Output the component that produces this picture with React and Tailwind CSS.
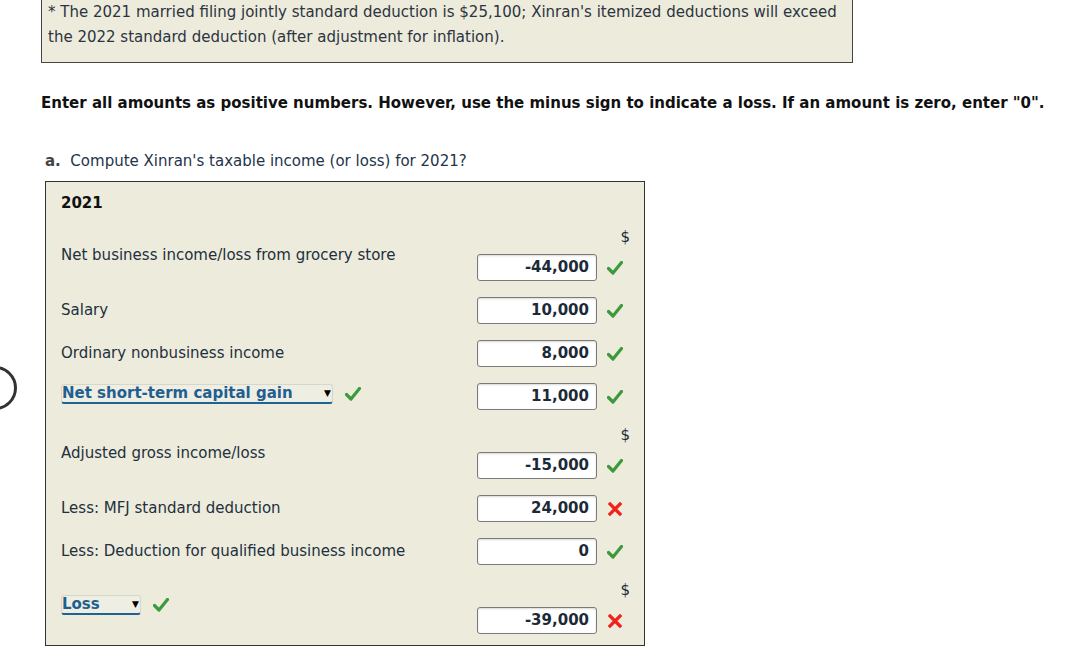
import React from "react";

function Check() {
    return (
        <svg width="16" height="14" viewBox="0 0 16 14" className="shrink-0">
            <path d="M1.5 7.5 L6 12 L14.5 1.5" fill="none" stroke="#3c9a3c" strokeWidth="3.2" strokeLinecap="round" strokeLinejoin="round" />
        </svg>
    );
}

function Cross() {
    return (
        <svg width="16" height="14" viewBox="0 0 16 14" className="shrink-0">
            <path d="M3 2 L13 12 M13 2 L3 12" fill="none" stroke="#f0201a" strokeWidth="3.2" strokeLinecap="square" />
        </svg>
    );
}

function Amount({ value, ok }) {
    return (
        <div className="flex items-center gap-[10px]">
            <div className="w-[120px] h-[27px] bg-white border border-[#7a7a7a] rounded-[3px] shadow-[inset_0_1px_2px_rgba(0,0,0,0.15)] flex items-center justify-end pr-[7px] font-bold text-[15px] text-[#1c2a38]">
                {value}
            </div>
            {ok ? <Check /> : <Cross />}
        </div>
    );
}

function Dropdown({ label, width }) {
    return (
        <div className="flex items-center gap-[12px]">
            <div className={`${width} h-[20px] flex items-center justify-between bg-[#efeee3] rounded-[3px] border border-[#d8d6c8] border-b-2 border-b-[#1f6394] pr-[1px]`}>
                <span className="font-bold text-[15px] text-[#1f5f92] leading-none">{label}</span>
                <span className="text-[9px] text-black leading-none">▼</span>
            </div>
            <Check />
        </div>
    );
}

// rows with a "$" over the amount box
function DollarRow({ left, value, ok, labelPad = "pt-[16px]" }) {
    return (
        <div className="flex">
            <div className={`w-[416px] ${labelPad}`}>{left}</div>
            <div className="w-[153px] flex flex-col">
                <div className="h-[18px] leading-[18px] text-right text-[15px] text-[#1c2a38] mb-[8px]">$</div>
                <Amount value={value} ok={ok} />
            </div>
        </div>
    );
}

function Row({ left, value, ok }) {
    return (
        <div className="flex items-center mt-[16px]">
            <div className="w-[416px]">{left}</div>
            <Amount value={value} ok={ok} />
        </div>
    );
}

export default function App() {
    return (
        <div className="relative w-[1074px] h-[664px] bg-white overflow-hidden text-[#22303c]" style={{ fontFamily: '"DejaVu Sans", Verdana, sans-serif' }}>
            {/* cut-off circle at the left edge */}
            <div className="absolute left-[-27px] top-[366px] w-[44px] h-[44px] rounded-full border-[3px] border-[#333]" />

            <div className="pl-[41px]">
                {/* note box */}
                <div className="w-[812px] border border-t-0 border-[#444] bg-[#edebdc] pl-[6px] pb-[12px] text-[15px] leading-[25px] text-[#2c3440]">
                    <p>* The 2021 married filing jointly standard deduction is $25,100; Xinran's itemized deductions will exceed</p>
                    <p>the 2022 standard deduction (after adjustment for inflation).</p>
                </div>

                {/* instructions */}
                <p className="mt-[30px] font-bold text-[15px] leading-[20px] text-[#111]">
                    Enter all amounts as positive numbers. However, use the minus sign to indicate a loss. If an amount is zero, enter "0".
                </p>

                <p className="mt-[38px] ml-[4px] text-[15px] leading-[20px] text-[#24344a]">
                    <span className="font-bold text-[#444]">a.</span>&nbsp; Compute Xinran's taxable income (or loss) for 2021?
                </p>

                {/* answer table */}
                <div className="mt-[10px] ml-[4px] w-[600px] border border-[#333] bg-[#edebdc] pl-[15px] pt-[11px] pb-[11px] text-[15px] text-[#22303c]">
                    <div className="font-bold leading-[20px] text-[#111]">2021</div>

                    <div className="mt-[15px]">
                        <DollarRow left={<span className="leading-[20px]">Net business income/loss from grocery store</span>} value="-44,000" ok />
                    </div>
                    <Row left="Salary" value="10,000" ok />
                    <Row left="Ordinary nonbusiness income" value="8,000" ok />
                    <div className="flex items-center mt-[16px]">
                        <div className="w-[416px] -mt-[6px]">
                            <Dropdown label="Net short-term capital gain" width="w-[272px]" />
                        </div>
                        <Amount value="11,000" ok />
                    </div>

                    <div className="mt-[16px]">
                        <DollarRow left={<span className="leading-[20px]">Adjusted gross income/loss</span>} value="-15,000" ok />
                    </div>
                    <Row left="Less: MFJ standard deduction" value="24,000" ok={false} />
                    <Row left="Less: Deduction for qualified business income" value="0" ok />

                    <div className="mt-[16px]">
                        <DollarRow left={<Dropdown label="Loss" width="w-[80px]" />} value="-39,000" ok={false} labelPad="pt-[14px]" />
                    </div>
                </div>
            </div>
        </div>
    );
}
